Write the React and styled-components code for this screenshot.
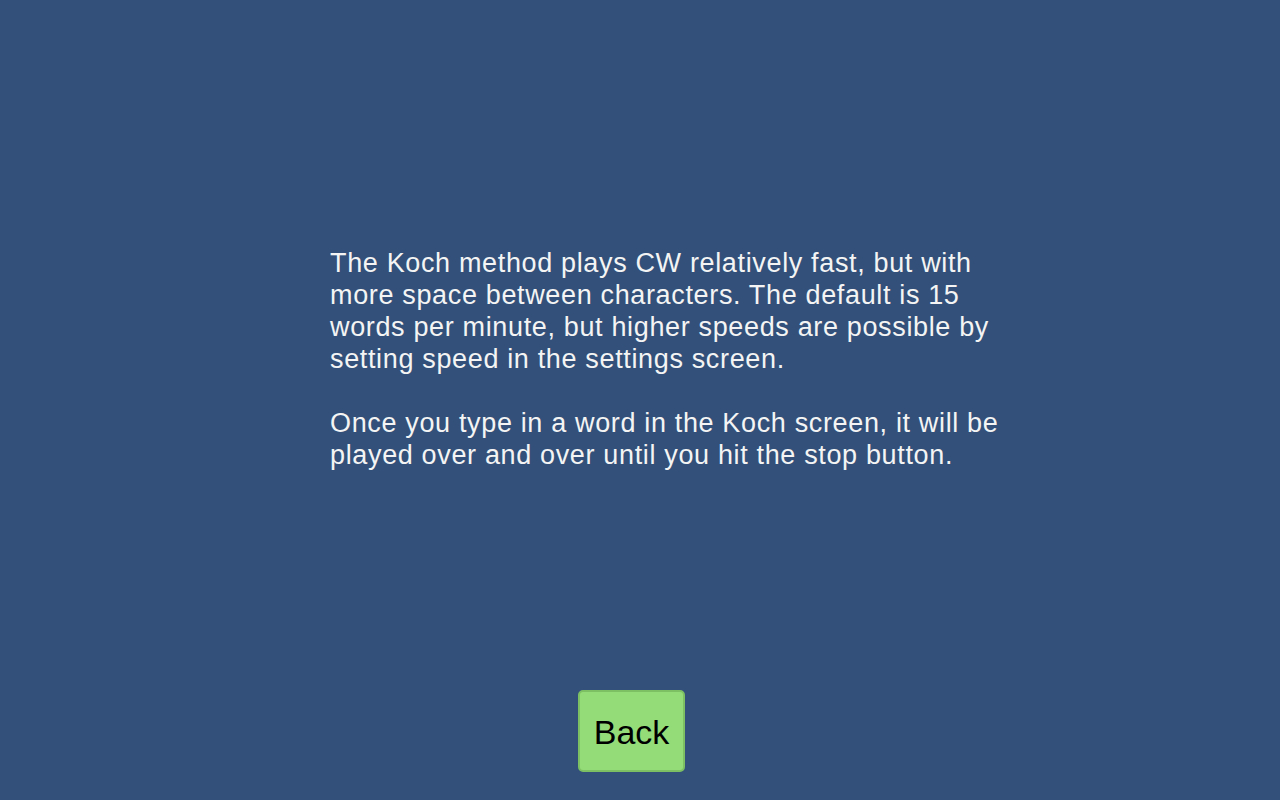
import React from 'react'
import styled, {createGlobalStyle} from 'styled-components'

const GlobalStyle = createGlobalStyle`
  html, body {
    margin: 0;
    padding: 0;
    background-color: #325079;
  }
  * {
    box-sizing: border-box;
  }
`

const App = () => {
  return (
    <Screen>
      <GlobalStyle/>
      <InfoText>
        <p>The Koch method plays CW relatively fast, but with more space between characters. The default is 15 words per minute, but higher speeds are possible by setting speed in the settings screen.</p>
        <p>Once you type in a word in the Koch screen, it will be played over and over until you hit the stop button.</p>
      </InfoText>
      <Footer>
        <BackButton>Back</BackButton>
      </Footer>
    </Screen>
  )
}

export default App

const Screen = styled.div`
  width: 1280px;
  height: 800px;
  display: flex;
  flex-direction: column;
  background-color: #325079;
  font-family: "Liberation Sans", Arial, sans-serif;
  overflow: hidden;
`

const InfoText = styled.div`
  margin: 247px 0 0 330px;
  width: 690px;
  color: #f4f4f4;
  font-size: 27px;
  line-height: 32px;
  letter-spacing: 0.65px;

  p {
    margin: 0 0 32px 0;
  }
`

const Footer = styled.div`
  margin-top: auto;
  padding: 0 0 28px 578px;
  display: flex;
`

const BackButton = styled.button`
  width: 107px;
  height: 82px;
  padding: 2px 0 0 0;
  border: 2px solid #7cc063;
  border-radius: 5px;
  background-color: #94dc78;
  color: #000;
  font-family: "Liberation Sans", Arial, sans-serif;
  font-size: 34px;
  cursor: pointer;
`
